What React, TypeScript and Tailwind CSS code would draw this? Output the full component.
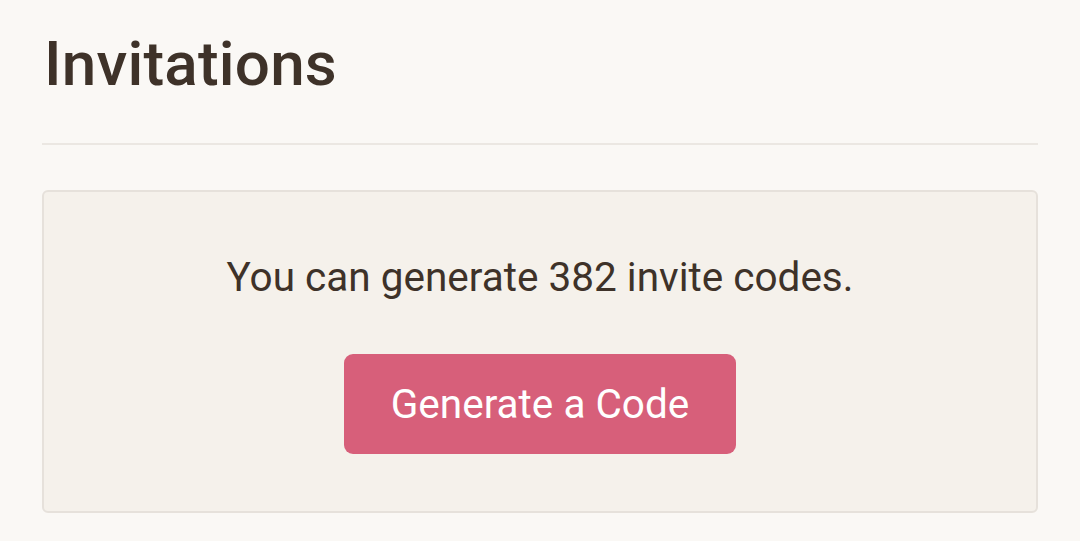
import React from "react";

const App: React.FC = () => {
  return (
    <div className="min-h-[541px] w-full bg-[#faf8f5] px-[42px] pt-[28px] font-['Roboto',sans-serif] text-[#3e3229]">
      {/* Header */}
      <h1 className="pl-[2px] text-[62px] font-medium leading-[72px] tracking-[0.2px]">
        Invitations
      </h1>
      <div className="mt-[43px] h-[2px] w-full bg-[#ebe7e2]" />

      {/* Invite card */}
      <div className="mt-[45px] flex h-[323px] flex-col items-center rounded-[6px] border-2 border-[#e6e1db] bg-[#f5f1eb]">
        <p className="mt-[61px] text-[40.5px] leading-[48px]">
          You can generate 382 invite codes.
        </p>
        <button
          type="button"
          className="mt-[53px] h-[100px] w-[392px] rounded-[9px] bg-[#d75f7a] text-[40.5px] text-white"
        >
          Generate a Code
        </button>
      </div>
    </div>
  );
};

export default App;
